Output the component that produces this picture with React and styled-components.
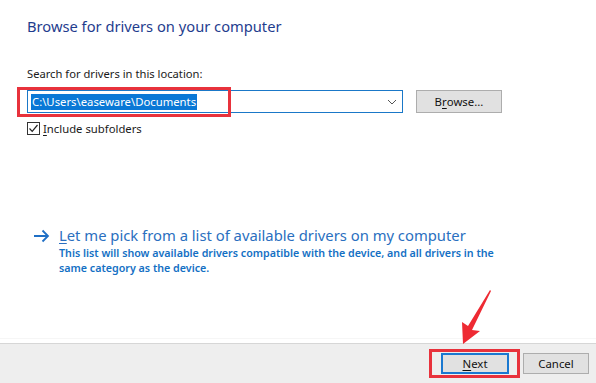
import React from "react";
import styled, { createGlobalStyle } from "styled-components";

const GlobalStyle = createGlobalStyle`
  html, body {
    margin: 0;
    padding: 0;
    background: #ffffff;
  }
  body {
    font-family: "Noto Sans", "Open Sans", Arial, sans-serif;
  }
`;

const Window = styled.div`
  position: relative;
  width: 596px;
  height: 383px;
  overflow: hidden;
  display: flex;
  flex-direction: column;
  background: #ffffff;
`;

const Content = styled.div`
  flex: 1;
  padding: 15px 0 0 27px;
`;

const Title = styled.h1`
  margin: 0;
  font-size: 14.7px;
  font-weight: 400;
  line-height: 22px;
  color: #1f3d8e;
`;

const Label = styled.div`
  margin-top: 29px;
  font-size: 11.2px;
  line-height: 16px;
  color: #1a1a1a;
`;

const PathRow = styled.div`
  margin-top: 8px;
  display: flex;
  align-items: center;
  gap: 13px;
`;

const Combo = styled.div`
  position: relative;
  box-sizing: border-box;
  width: 376px;
  height: 23px;
  border: 1px solid #1a78c8;
  display: flex;
  align-items: center;
  padding-left: 3px;
`;

const Selected = styled.span`
  background: #0a78d6;
  color: #ffffff;
  font-size: 11.3px;
  line-height: 16px;
  padding: 0 1px;
`;

const Chevron = styled.svg`
  position: absolute;
  right: 5px;
  top: 8px;
`;

const Annotation = styled.div`
  position: absolute;
  border: 3px solid #e8323c;
  left: ${(p) => p.$left}px;
  top: ${(p) => p.$top}px;
  width: ${(p) => p.$width}px;
  height: ${(p) => p.$height}px;
  box-sizing: border-box;
  pointer-events: none;
`;

const Button = styled.div`
  box-sizing: border-box;
  width: ${(p) => p.$width}px;
  height: ${(p) => (p.$height ? p.$height : 21)}px;
  border: ${(p) => (p.$primary ? "2px solid #1a78d0" : "1px solid #adadad")};
  background: #e1e1e1;
  font-size: 11.4px;
  color: #111111;
  display: flex;
  align-items: center;
  justify-content: center;
`;

const Check = styled.div`
  margin-top: 8px;
  display: flex;
  align-items: center;
  gap: 3px;
  font-size: 11.3px;
  color: #1a1a1a;
`;

const Box = styled.div`
  box-sizing: border-box;
  width: 13px;
  height: 13px;
  border: 1px solid #333333;
  display: flex;
  align-items: center;
  justify-content: center;
`;

const U = styled.span`
  text-decoration: underline;
  text-underline-offset: 2px;
`;

const LinkBlock = styled.div`
  margin-top: 89px;
  margin-left: 6px;
  display: flex;
  gap: 9px;
`;

const LinkText = styled.div`
  display: flex;
  flex-direction: column;
`;

const LinkTitle = styled.div`
  font-size: 14.8px;
  line-height: 20px;
  color: #2a6fc0;
`;

const LinkDesc = styled.div`
  margin-top: 1px;
  font-size: 10.7px;
  line-height: 15px;
  font-weight: 600;
  color: #1470c4;
  width: 445px;
`;

const Footer = styled.div`
  box-sizing: border-box;
  height: 40px;
  border-top: 1px solid #d6d6d6;
  background: #eeeeee;
  display: flex;
  justify-content: flex-end;
  align-items: flex-start;
  padding: 9px 7px 0 0;
  gap: 14px;
`;

const FaintLine = styled.div`
  height: 1px;
  background: #f6f6f6;
  margin-bottom: 4px;
`;

const Pointer = styled.svg`
  position: absolute;
  left: 455px;
  top: 286px;
`;

export default function App() {
  return (
    <Window>
      <GlobalStyle />
      <Content>
        <Title>Browse for drivers on your computer</Title>
        <Label>Search for drivers in this location:</Label>
        <PathRow>
          <Combo>
            <Selected>C:\Users\easeware\Documents</Selected>
            <Chevron width="10" height="6" viewBox="0 0 10 6">
              <path d="M1 1 L5 5 L9 1" fill="none" stroke="#555" strokeWidth="1" />
            </Chevron>
          </Combo>
          <Button $width={86} $height={23}>
            B<U>r</U>owse...
          </Button>
        </PathRow>
        <Check>
          <Box>
            <svg width="11" height="11" viewBox="0 0 11 11">
              <path d="M1.5 5.5 L4.2 8.3 L9.5 2" fill="none" stroke="#222" strokeWidth="1.2" />
            </svg>
          </Box>
          <span>
            <U>I</U>nclude subfolders
          </span>
        </Check>
        <LinkBlock>
          <svg width="17" height="14" viewBox="0 0 17 14" style={{ marginTop: 4 }}>
            <path d="M1 7 H15 M9.5 1.5 L15 7 L9.5 12.5" fill="none" stroke="#1f6fc5" strokeWidth="1.8" />
          </svg>
          <LinkText>
            <LinkTitle>
              <U>L</U>et me pick from a list of available drivers on my computer
            </LinkTitle>
            <LinkDesc>
              This list will show available drivers compatible with the device, and all drivers in the
              same category as the device.
            </LinkDesc>
          </LinkText>
        </LinkBlock>
      </Content>
      <FaintLine />
      <Footer>
        <Button $width={68} $primary>
          <U>N</U>ext
        </Button>
        <Button $width={66}>Cancel</Button>
      </Footer>
      <Annotation $left={17} $top={87} $width={214} $height={30} />
      <Annotation $left={429} $top={349} $width={91} $height={29} />
      <Pointer width="40" height="62" viewBox="0 0 40 62">
        <path d="M35 4 L36 5 L17 44 L25 45 L8 58 L7 36 L13 40 Z" fill="#ee2a33" />
      </Pointer>
    </Window>
  );
}
